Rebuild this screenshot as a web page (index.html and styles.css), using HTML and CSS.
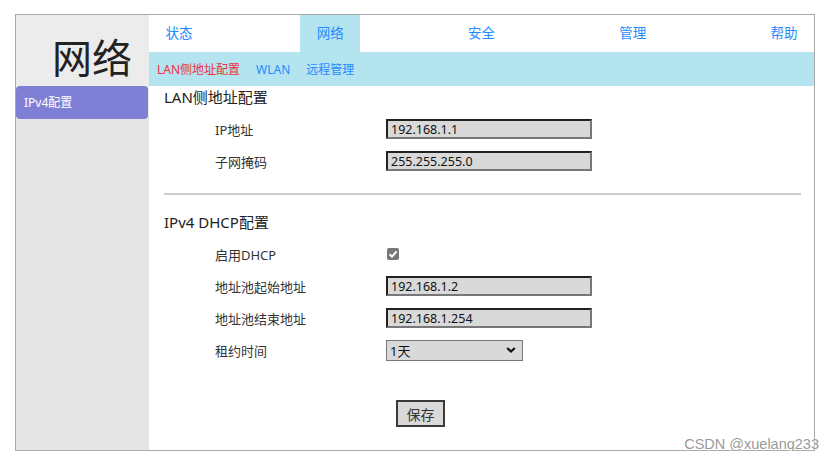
FILE: index.html
```html
<!DOCTYPE html>
<html lang="zh-CN">
<head>
    <meta charset="UTF-8">
    <title>网络 - IPv4配置</title>
    <link rel="stylesheet" href="styles.css">
</head>
<body>
    <div class="frame">
        <div class="sidebar">
            <div class="logo">网络</div>
            <ul class="side-menu">
                <li class="active">IPv4配置</li>
            </ul>
        </div>
        <div class="main">
            <ul class="top-nav">
                <li>状态</li>
                <li class="active">网络</li>
                <li>安全</li>
                <li>管理</li>
                <li>帮助</li>
            </ul>
            <ul class="sub-nav">
                <li class="active">LAN侧地址配置</li>
                <li>WLAN</li>
                <li>远程管理</li>
            </ul>
            <div class="content">
                <h3 class="section-title first">LAN侧地址配置</h3>
                <div class="row">
                    <label>IP地址</label>
                    <input class="field" type="text" value="192.168.1.1">
                </div>
                <div class="row">
                    <label>子网掩码</label>
                    <input class="field" type="text" value="255.255.255.0">
                </div>
                <hr class="divider">
                <h3 class="section-title">IPv4 DHCP配置</h3>
                <div class="row">
                    <label>启用DHCP</label>
                    <span class="check">
                        <svg width="12" height="12" viewBox="0 0 12 12"><path d="M2.5 6.2 L5 8.6 L9.6 3.4" fill="none" stroke="#fff" stroke-width="2"/></svg>
                    </span>
                </div>
                <div class="row">
                    <label>地址池起始地址</label>
                    <input class="field" type="text" value="192.168.1.2">
                </div>
                <div class="row">
                    <label>地址池结束地址</label>
                    <input class="field" type="text" value="192.168.1.254">
                </div>
                <div class="row">
                    <label>租约时间</label>
                    <div class="select">
                        <span>1天</span>
                        <svg width="10" height="8" viewBox="0 0 10 8"><path d="M1.2 2 L5 5.6 L8.8 2" fill="none" stroke="#111" stroke-width="2.2"/></svg>
                    </div>
                </div>
                <div class="actions">
                    <button class="save">保存</button>
                </div>
            </div>
        </div>
        <div class="watermark">CSDN @xuelang233</div>
    </div>
</body>
</html>
```
FILE: styles.css
```css
body {
    margin: 0;
    font-family: "Noto Sans", "Noto Sans CJK SC", sans-serif;
    background: #fff;
    color: #333;
}
ul {
    list-style: none;
    margin: 0;
    padding: 0;
}
.frame {
    position: relative;
    box-sizing: border-box;
    width: 800px;
    height: 437px;
    margin: 14px 0 0 15px;
    border: 1px solid #aaa;
    display: flex;
}
.sidebar {
    width: 133px;
    background: #e6e6e6;
    flex-shrink: 0;
}
.logo {
    height: 71px;
    box-sizing: border-box;
    padding: 17px 0 0 36px;
    background: #ececec;
    font-family: "Noto Sans CJK SC", sans-serif;
    font-size: 40px;
    line-height: 48px;
    color: #222;
}
.side-menu li {
    height: 33px;
    line-height: 33px;
    padding-left: 8px;
    margin-right: 1px;
    border-radius: 4px;
    font-size: 12px;
    color: #fff;
}
.side-menu li.active {
    background: #7f7fd5;
}
.main {
    flex: 1;
    display: flex;
    flex-direction: column;
}
.top-nav {
    height: 37px;
    display: flex;
    justify-content: space-between;
}
.top-nav li {
    width: 60px;
    line-height: 37px;
    text-align: center;
    font-size: 13.5px;
    color: #1f8bff;
}
.top-nav li.active {
    background: #b4e4f0;
}
.sub-nav {
    height: 34px;
    background: #b4e4f0;
    display: flex;
    gap: 16px;
    padding-left: 8px;
    align-items: center;
}
.sub-nav li {
    font-size: 12px;
    color: #1f8bff;
}
.sub-nav li.active {
    color: #f03040;
}
.content {
    padding: 0 13px 0 15px;
}
.section-title {
    margin: 16px 0 5px;
    height: 22px;
    line-height: 22px;
    font-size: 15px;
    font-weight: normal;
    color: #222;
}
.section-title.first {
    margin: 0 0 5px;
}
.row {
    height: 32px;
    display: flex;
    align-items: center;
}
.row label {
    width: 222px;
    box-sizing: border-box;
    padding-left: 51px;
    font-size: 13px;
    color: #333;
}
.field {
    box-sizing: border-box;
    width: 206px;
    height: 20px;
    padding: 0 3px;
    margin: 0;
    border: 2px solid;
    border-color: #222 #777 #777 #222;
    background: #d9d9d9;
    font-family: "Noto Sans", "Noto Sans CJK SC", sans-serif;
    font-size: 12.5px;
    color: #111;
    outline: none;
}
.check {
    width: 12px;
    height: 12px;
    margin-left: 1px;
    border-radius: 2px;
    background: #777;
    display: flex;
}
.select {
    box-sizing: border-box;
    width: 137px;
    height: 21px;
    padding: 0 6px 0 3px;
    border: 1px solid #777;
    background: #d9d9d9;
    display: flex;
    align-items: center;
    justify-content: space-between;
    font-size: 13px;
    color: #111;
}
.divider {
    margin: 16px 0 0;
    border: none;
    height: 2px;
    background: #ccc;
}
.actions {
    margin-top: 34px;
    padding-left: 232px;
}
.save {
    width: 49px;
    height: 27px;
    padding: 0;
    border: 2px solid #3a3a3a;
    background: #d9d9d9;
    font-family: "Noto Sans CJK SC", sans-serif;
    font-size: 14px;
    color: #333;
}
.watermark {
    position: absolute;
    right: -5px;
    bottom: -2px;
    font-family: "Liberation Sans", Arial, sans-serif;
    font-size: 14.5px;
    color: #9a9a9a;
    text-shadow: 0 0 2px #fff, 0 0 2px #fff;
}
```
